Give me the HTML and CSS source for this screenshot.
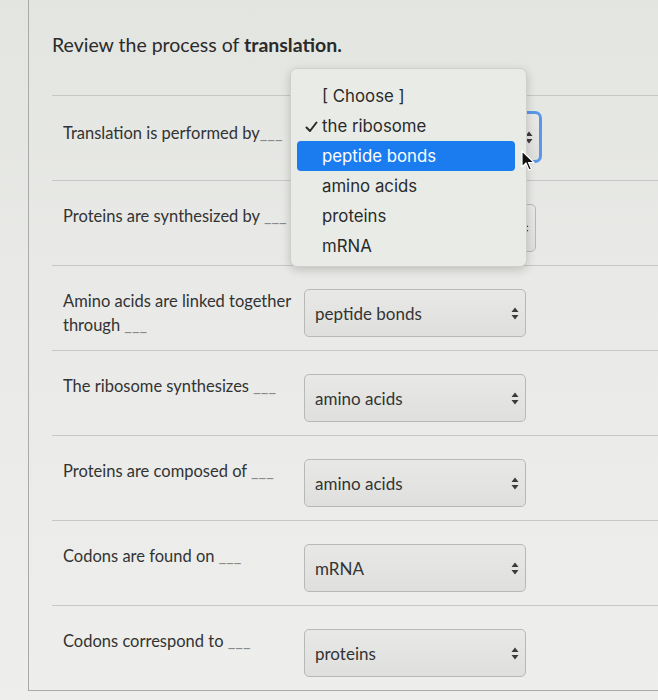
FILE: index.html
```html
<!DOCTYPE html>
<html>
<head>
<meta charset="utf-8">
<link rel="stylesheet" href="styles.css">
</head>
<body>
<div class="panel">
  <h1 class="title">Review the process of <strong>translation.</strong></h1>
  <div class="list">
    <div class="row">
      <div class="label">Translation is performed by<span class="blank">___</span></div>
      <div class="select focused"><span class="value"></span><svg class="arrows" width="8" height="13" viewBox="0 0 8 13"><path d="M4 0.5 L7.5 5 L0.5 5 Z M4 12.5 L7.5 8 L0.5 8 Z" fill="#3a3a3a"/></svg></div>
    </div>
    <div class="row">
      <div class="label">Proteins are synthesized by <span class="blank">___</span></div>
      <div class="select"><span class="value"></span><svg class="arrows" width="8" height="13" viewBox="0 0 8 13"><path d="M4 0.5 L7.5 5 L0.5 5 Z M4 12.5 L7.5 8 L0.5 8 Z" fill="#3a3a3a"/></svg></div>
    </div>
    <div class="row">
      <div class="label">Amino acids are linked together<br>through <span class="blank">___</span></div>
      <div class="select"><span class="value">peptide bonds</span><svg class="arrows" width="8" height="13" viewBox="0 0 8 13"><path d="M4 0.5 L7.5 5 L0.5 5 Z M4 12.5 L7.5 8 L0.5 8 Z" fill="#3a3a3a"/></svg></div>
    </div>
    <div class="row">
      <div class="label">The ribosome synthesizes <span class="blank">___</span></div>
      <div class="select"><span class="value">amino acids</span><svg class="arrows" width="8" height="13" viewBox="0 0 8 13"><path d="M4 0.5 L7.5 5 L0.5 5 Z M4 12.5 L7.5 8 L0.5 8 Z" fill="#3a3a3a"/></svg></div>
    </div>
    <div class="row">
      <div class="label">Proteins are composed of <span class="blank">___</span></div>
      <div class="select"><span class="value">amino acids</span><svg class="arrows" width="8" height="13" viewBox="0 0 8 13"><path d="M4 0.5 L7.5 5 L0.5 5 Z M4 12.5 L7.5 8 L0.5 8 Z" fill="#3a3a3a"/></svg></div>
    </div>
    <div class="row">
      <div class="label">Codons are found on <span class="blank">___</span></div>
      <div class="select"><span class="value">mRNA</span><svg class="arrows" width="8" height="13" viewBox="0 0 8 13"><path d="M4 0.5 L7.5 5 L0.5 5 Z M4 12.5 L7.5 8 L0.5 8 Z" fill="#3a3a3a"/></svg></div>
    </div>
    <div class="row">
      <div class="label">Codons correspond to <span class="blank">___</span></div>
      <div class="select"><span class="value">proteins</span><svg class="arrows" width="8" height="13" viewBox="0 0 8 13"><path d="M4 0.5 L7.5 5 L0.5 5 Z M4 12.5 L7.5 8 L0.5 8 Z" fill="#3a3a3a"/></svg></div>
    </div>
  </div>
</div>

<div class="menu">
  <div class="item">[ Choose ]</div>
  <div class="item"><svg class="check" width="13" height="12" viewBox="0 0 13 12"><path d="M1.5 6.5 L5 10 L11.5 1.5" fill="none" stroke="#2a2a2a" stroke-width="2" stroke-linecap="round" stroke-linejoin="round"/></svg>the ribosome</div>
  <div class="item active">peptide bonds</div>
  <div class="item">amino acids</div>
  <div class="item">proteins</div>
  <div class="item">mRNA</div>
</div>

<svg class="cursor" width="14" height="22" viewBox="0 0 14 22">
  <path d="M1 1 L1 17 L5 13 L8 20 L10.5 19 L7.5 12.5 L13 12.5 Z" fill="#111" stroke="#fff" stroke-width="1.2" stroke-linejoin="round"/>
</svg>
</body>
</html>
```

FILE: styles.css
```css
html, body {
  margin: 0;
  padding: 0;
}

body {
  width: 658px;
  height: 700px;
  overflow: hidden;
  position: relative;
  background: linear-gradient(180deg, #e3e5e1 0%, #e9eae7 40%, #eeefed 100%);
  font-family: Lato, "Open Sans", sans-serif;
  color: #2f2f2f;
}

.panel {
  margin-left: 28px;
  height: 659px;
  border-left: 1px solid #a9aba8;
  border-bottom: 1px solid #a9aba8;
  padding: 31px 0 0 23px;
}

.title {
  margin: 0;
  font-size: 19.5px;
  line-height: 28px;
  font-weight: 400;
  color: #2b2b2b;
}

.title strong {
  font-weight: 700;
}

.list {
  margin-top: 36px;
}

.row {
  height: 85px;
  box-sizing: border-box;
  border-top: 1px solid #c6c8c5;
  display: flex;
  align-items: flex-start;
  padding: 23px 0 0 11px;
}

.row:first-child {
  padding-top: 25px;
}

.label {
  width: 229px;
  flex-shrink: 0;
  white-space: nowrap;
  font-size: 16.5px;
  line-height: 24px;
  color: #333;
}

.blank {
  color: #8a8a8a;
}

.select {
  margin: 0 0 0 12px;
  width: 222px;
  height: 48px;
  box-sizing: border-box;
  border: 1px solid #b7b9b6;
  border-radius: 5px;
  background: linear-gradient(180deg, #e8e9e7 0%, #dfe0de 100%);
  display: flex;
  align-items: center;
  justify-content: space-between;
  padding: 0 6px 0 10px;
  font-size: 17px;
  color: #333;
}

.row:first-child .select {
  margin-top: -10px;
  height: 52px;
  width: 238px;
  border: 3px solid #5b97e8;
  border-radius: 7px;
}

.row:nth-child(2) .select {
  width: 232px;
}

.arrows {
  display: block;
}

.menu {
  position: absolute;
  left: 290px;
  top: 68px;
  width: 237px;
  height: 199px;
  box-sizing: border-box;
  padding: 12px 11px 7px 6px;
  background: #e9ece6;
  border: 1px solid #cdd0cb;
  border-radius: 7px;
  box-shadow: 0 3px 10px rgba(0, 0, 0, 0.18);
  font-family: Inter, "Open Sans", sans-serif;
  font-size: 16.8px;
  color: #2a2a2a;
}

.item {
  height: 30px;
  line-height: 30px;
  padding-left: 25px;
  position: relative;
  border-radius: 4px;
}

.item.active {
  background: #1b7cf0;
  color: #fff;
}

.check {
  position: absolute;
  left: 8px;
  top: 10px;
}

.cursor {
  position: absolute;
  left: 521px;
  top: 150px;
}
```
